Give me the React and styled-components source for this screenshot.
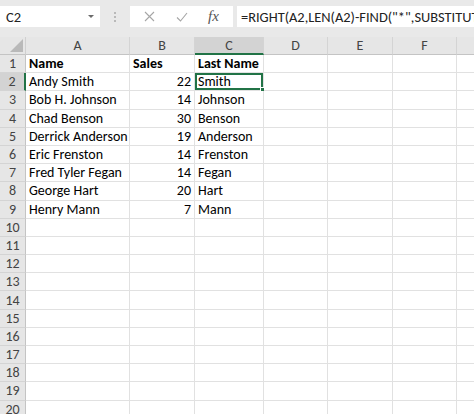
import React from "react";
import styled, { createGlobalStyle } from "styled-components";

const GlobalStyle = createGlobalStyle`
  html, body {
    margin: 0;
    padding: 0;
    background: #ffffff;
  }
  body {
    font-family: Carlito, Lato, "Open Sans", sans-serif;
  }
`;

const Window = styled.div`
  width: 474px;
  height: 414px;
  overflow: hidden;
  background: #ffffff;
  display: flex;
  flex-direction: column;
`;

const Toolbar = styled.div`
  flex: none;
  height: 37px;
  box-sizing: border-box;
  padding: 6px 0 10px 0;
  background: #e9e9e9;
  display: flex;
  align-items: stretch;
`;

const NameBox = styled.div`
  width: 100px;
  box-sizing: border-box;
  background: #ffffff;
  display: flex;
  align-items: center;
  justify-content: space-between;
  padding: 0 6px 0 6px;
  font-size: 14.5px;
  color: #222;
`;

const Caret = styled.span`
  width: 0;
  height: 0;
  border-left: 3px solid transparent;
  border-right: 3px solid transparent;
  border-top: 3px solid #6b6b6b;
`;

const Grip = styled.div`
  width: 30px;
  display: flex;
  flex-direction: column;
  align-items: center;
  justify-content: center;
  gap: 2px;
`;

const Dot = styled.span`
  width: 2px;
  height: 2px;
  border-radius: 1px;
  background: #a8a8a8;
`;

const FuncBox = styled.div`
  width: 103px;
  background: #ffffff;
  display: flex;
  align-items: center;
  justify-content: space-around;
  padding: 0 4px;
  box-sizing: border-box;
  color: #a6a6a6;
`;

const FxLabel = styled.span`
  font-family: "Liberation Serif", serif;
  font-style: italic;
  font-size: 15px;
  color: #555;
`;

const FormulaBox = styled.div`
  flex: 1;
  margin-left: 4px;
  background: #ffffff;
  display: flex;
  align-items: center;
  padding-left: 4px;
  overflow: hidden;
  white-space: nowrap;
  font-size: 14.4px;
  color: #222;
`;

const Sheet = styled.div`
  flex: none;
  display: grid;
  grid-template-columns: 26px 104px 65px 69px 64px 65px 64px 64px;
  grid-template-rows: 18px;
  grid-auto-rows: 18.2px;
  font-size: 14px;
  color: #000;
`;

const Corner = styled.div`
  background: #e6e6e6;
  border-right: 1px solid #d0d0d0;
  border-bottom: 1px solid #c4c4c4;
  box-sizing: border-box;
  position: relative;
  &::after {
    content: "";
    position: absolute;
    right: 2px;
    bottom: 2px;
    width: 0;
    height: 0;
    border-left: 13px solid transparent;
    border-bottom: 13px solid #b9b9b9;
  }
`;

const ColHead = styled.div`
  background: ${(p) => (p.$active ? "#d3d3d3" : "#e6e6e6")};
  border-right: 1px solid #d4d4d4;
  border-bottom: ${(p) => (p.$active ? "2px solid #217346" : "1px solid #c4c4c4")};
  box-sizing: border-box;
  display: flex;
  align-items: center;
  justify-content: center;
  color: #444;
  font-size: 14px;
`;

const RowHead = styled.div`
  background: ${(p) => (p.$active ? "#d3d3d3" : "#e6e6e6")};
  border-right: ${(p) => (p.$active ? "2px solid #217346" : "1px solid #c4c4c4")};
  border-bottom: 1px solid #d4d4d4;
  box-sizing: border-box;
  display: flex;
  align-items: center;
  justify-content: center;
  color: #444;
  font-size: 14px;
`;

const Cell = styled.div`
  position: relative;
  border-right: 1px solid #e1e1e1;
  border-bottom: 1px solid #e1e1e1;
  box-sizing: border-box;
  display: flex;
  align-items: center;
  justify-content: ${(p) => (p.$num ? "flex-end" : "flex-start")};
  padding: 0 3px;
  white-space: nowrap;
  overflow: visible;
  font-weight: ${(p) => (p.$bold ? 700 : 400)};
  box-shadow: ${(p) => (p.$active ? "inset 0 0 0 2px #217346" : "none")};
`;

const Handle = styled.span`
  position: absolute;
  right: -2px;
  bottom: -2px;
  width: 5px;
  height: 5px;
  background: #217346;
  border: 1px solid #ffffff;
  box-sizing: border-box;
`;

// G sits past the right edge, so its header stays blank
const cols = ["A", "B", "C", "D", "E", "F", ""];

const data = [
  ["Andy Smith", 22, "Smith"],
  ["Bob H. Johnson", 14, "Johnson"],
  ["Chad Benson", 30, "Benson"],
  ["Derrick Anderson", 19, "Anderson"],
  ["Eric Frenston", 14, "Frenston"],
  ["Fred Tyler Fegan", 14, "Fegan"],
  ["George Hart", 20, "Hart"],
  ["Henry Mann", 7, "Mann"],
];

const formula =
  '=RIGHT(A2,LEN(A2)-FIND("*",SUBSTITUTE(A2," ","*",LEN(A2)-LEN(SUBSTITUTE(A2," ","")))))';

const CrossIcon = () => (
  <svg width="11" height="11" viewBox="0 0 11 11">
    <path d="M1 1 L10 10 M10 1 L1 10" stroke="#a6a6a6" strokeWidth="1.1" fill="none" />
  </svg>
);

const CheckIcon = () => (
  <svg width="12" height="10" viewBox="0 0 12 10">
    <path d="M1 5.5 L4.5 9 L11 1" stroke="#a6a6a6" strokeWidth="1.1" fill="none" />
  </svg>
);

export default function App() {
  const rows = [];
  for (let r = 1; r <= 20; r++) {
    let values = ["", "", ""];
    let bold = false;
    if (r === 1) {
      values = ["Name", "Sales", "Last Name"];
      bold = true;
    } else if (r <= 9) {
      values = data[r - 2];
    }
    rows.push(
      <React.Fragment key={r}>
        <RowHead $active={r === 2}>{r}</RowHead>
        <Cell $bold={bold}>{values[0]}</Cell>
        <Cell $bold={bold} $num={r > 1}>
          {values[1]}
        </Cell>
        <Cell $bold={bold} $active={r === 2}>
          {values[2]}
          {r === 2 && <Handle />}
        </Cell>
        <Cell />
        <Cell />
        <Cell />
        <Cell />
      </React.Fragment>
    );
  }

  return (
    <>
      <GlobalStyle />
      <Window>
        <Toolbar>
          <NameBox>
            C2
            <Caret />
          </NameBox>
          <Grip>
            <Dot />
            <Dot />
            <Dot />
          </Grip>
          <FuncBox>
            <CrossIcon />
            <CheckIcon />
            <FxLabel>fx</FxLabel>
          </FuncBox>
          <FormulaBox>{formula}</FormulaBox>
        </Toolbar>
        <Sheet>
          <Corner />
          {cols.map((c, i) => (
            <ColHead key={i} $active={c === "C"}>
              {c}
            </ColHead>
          ))}
          {rows}
        </Sheet>
      </Window>
    </>
  );
}
